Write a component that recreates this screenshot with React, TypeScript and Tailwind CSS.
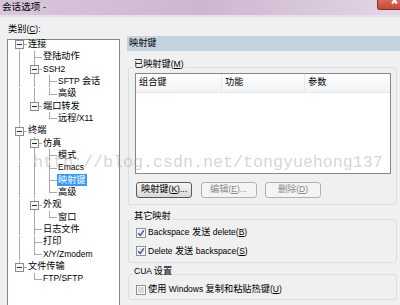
import React from 'react'

// CJK runs render at 9.2px, latin runs a bit smaller (Tahoma-like proportions)
const CJK_SPLIT = /([\u2e80-\u9fff\uff00-\uffef]+)/

function T({ s, big }: { s: string; big?: boolean }) {
  const parts = s.split(CJK_SPLIT)
  return (
    <span className="whitespace-pre">
      {parts.map((p, i) => {
        if (!p) return null
        if (i % 2) return <span key={i} className={big ? 'text-[9.6px]' : 'text-[9.2px]'}>{p}</span>
        const m = p.split(/&(.)/)
        return (
          <span key={i} className={big ? 'text-[9px]' : 'text-[8.5px]'}>
            {m.map((q, j) => (j % 2 ? <u key={j}>{q}</u> : q))}
          </span>
        )
      })}
    </span>
  )
}

type N = { t: string; sel?: boolean; c?: N[] }
type Row = { n: N; guides: boolean[]; last: boolean; first: boolean }

const TREE: N[] = [
  {
    t: '连接',
    c: [
      { t: '登陆动作' },
      { t: 'SSH2', c: [{ t: 'SFTP 会话' }, { t: '高级' }] },
      { t: '端口转发', c: [{ t: '远程/X11' }] },
    ],
  },
  {
    t: '终端',
    c: [
      { t: '仿真', c: [{ t: '模式' }, { t: 'Emacs' }, { t: '映射键', sel: true }, { t: '高级' }] },
      { t: '外观', c: [{ t: '窗口' }] },
      { t: '日志文件' },
      { t: '打印' },
      { t: 'X/Y/Zmodem' },
    ],
  },
  { t: '文件传输', c: [{ t: 'FTP/SFTP' }] },
]

function flatten(nodes: N[], guides: boolean[], out: Row[]) {
  nodes.forEach((n, i) => {
    const last = i === nodes.length - 1
    out.push({ n, guides, last, first: guides.length === 0 && i === 0 })
    if (n.c) flatten(n.c, [...guides, !last], out)
  })
  return out
}
const ROWS = flatten(TREE, [], [])

const H = 12.35
const LINE = '#a9a9a9'

function Guide({ on }: { on: boolean }) {
  return (
    <svg width="15" height={H} className="shrink-0" shapeRendering="crispEdges">
      {on && <line x1="7.5" y1="0" x2="7.5" y2={H} stroke={LINE} />}
    </svg>
  )
}

function Connector({ first, last, exp }: { first: boolean; last: boolean; exp: boolean }) {
  return (
    <svg width="15" height={H} className="shrink-0" shapeRendering="crispEdges">
      {!first && <line x1="7.5" y1="0" x2="7.5" y2="6.5" stroke={LINE} />}
      {!last && <line x1="7.5" y1="6.5" x2="7.5" y2={H} stroke={LINE} />}
      <line x1="7.5" y1="6.5" x2="15" y2="6.5" stroke={LINE} />
      {exp && (
        <>
          <rect x="3.5" y="2.5" width="8" height="8" fill="#f6f6f6" stroke="#8c8c8c" />
          <line x1="5" y1="6.5" x2="10" y2="6.5" stroke="#2b2b2b" />
        </>
      )}
    </svg>
  )
}

function TreeRow({ r }: { r: Row }) {
  return (
    <div className="flex h-[12.35px]">
      {r.guides.map((g, i) => (
        <Guide key={i} on={g} />
      ))}
      <Connector first={r.first} last={r.last} exp={!!r.n.c} />
      <div className={`flex items-center px-[1px] whitespace-nowrap ${r.n.sel ? 'bg-[#3399ff] text-white' : ''}`}>
        <T s={r.n.t} />
      </div>
    </div>
  )
}

function Group({ label, className, children }: { label: string; className: string; children: React.ReactNode }) {
  return (
    <div className={`border border-[#d5dfe5] rounded-[3px] ${className}`}>
      <div className="-mt-[8px] ml-[4px] h-[9px] w-fit px-[1px] bg-[#f0f0f0] whitespace-nowrap flex items-center">
        <T s={label} />
      </div>
      {children}
    </div>
  )
}

function Check({ on }: { on?: boolean }) {
  return (
    <svg width="10" height="10" className="shrink-0" shapeRendering="crispEdges">
      <rect x="0.5" y="0.5" width="9" height="9" fill="#fbfbfb" stroke="#8e8f8f" />
      <rect x="2" y="2" width="6" height="6" fill={on ? '#e3e7ee' : '#d6d8dc'} />
      {on && (
        <path d="M2.3 5.2 L4.2 7.4 L7.9 2.4" stroke="#3c5a9a" strokeWidth="1.4" fill="none" shapeRendering="auto" />
      )}
    </svg>
  )
}

function Btn({ label, primary }: { label: string; primary?: boolean }) {
  return (
    <div
      className={`w-[56px] h-[16px] flex items-center justify-center rounded-[3px] whitespace-nowrap ${
        primary
          ? 'border border-[#555a5e] bg-linear-to-b from-[#f6f6f6] to-[#d9d9d9] text-black'
          : 'border border-[#adb2b5] bg-[#f4f4f4] text-[#8a8a8a]'
      }`}
    >
      <T s={label} />
    </div>
  )
}

export default function App() {
  return (
    <div className="relative w-[400px] h-[305px] overflow-hidden bg-[#f0f0f0] text-black text-[9.2px] leading-none font-['Liberation_Sans','Noto_Sans_CJK_SC',sans-serif]">
      {/* title bar */}
      <div className="flex h-[15px] bg-linear-to-r from-[#d8c6db] via-[#ccb7cf] to-[#e4d5e6]">
        <div className="pl-[2px] flex items-center whitespace-nowrap">
          <T s="会话选项 -" big />
        </div>
        <div className="ml-auto w-[23px] h-[9.5px] rounded-bl-[3px] border-l border-b border-[#86301f] bg-linear-to-b from-[#d86a55] to-[#c4493a] overflow-hidden">
          <svg width="23" height="9">
            <path d="M14 -2 L19 3.5 M19 -2 L14 3.5" stroke="#fff" strokeWidth="2" />
          </svg>
        </div>
      </div>
      <div className="h-[2px] bg-[#e8dfe9]" />

      <div className="flex h-[288px]">
        {/* category tree */}
        <div className="w-[127px] pl-[7px] flex flex-col">
          <div className="h-[22px] pt-[7.5px] pl-[1px] whitespace-nowrap">
            <T s="类别(&C):" />
          </div>
          <div className="w-[113px] flex-1 bg-white border border-b-0 border-[#828790] pl-[4px]">
            <div className="-mt-[1.7px]">
              {ROWS.map((r, i) => (
                <TreeRow key={i} r={r} />
              ))}
            </div>
          </div>
        </div>

        {/* page */}
        <div className="flex-1 pt-[19px]">
          <div className="h-[15px] bg-[#c5d2df] flex items-center pl-[2px]">
            <T s="映射键" />
          </div>

          <Group label="已映射键(&M)" className="mt-[16px] ml-[1px] mr-[3px] pb-[6px]">
            <div className="ml-[6px] mr-[5px] mt-[4px] h-[101px] border border-[#828790] bg-white">
              <div className="h-[19px] flex bg-linear-to-b from-white to-[#f2f3f5] border-b border-[#e3e5e8]">
                <div className="w-[86px] pl-[3px] flex items-center border-r border-[#e8e9ec]">
                  <T s="组合键" />
                </div>
                <div className="w-[83px] pl-[3px] flex items-center border-r border-[#e8e9ec]">
                  <T s="功能" />
                </div>
                <div className="flex-1 pl-[3px] flex items-center">
                  <T s="参数" />
                </div>
              </div>
            </div>
            <div className="flex gap-[8.5px] ml-[7px] mt-[8px]">
              <Btn label="映射键(&K)..." primary />
              <Btn label="编辑(&E)..." />
              <Btn label="删除(&D)" />
            </div>
          </Group>

          <Group label="其它映射" className="mt-[14px] ml-[1px] mr-[3px] pb-[1px]">
            <div className="mt-[2.5px]">
              <div className="h-[18.5px] flex items-center pl-[7px] gap-[2px] whitespace-nowrap">
                <Check on />
                <T s="Backspace 发送 delete(&B)" />
              </div>
              <div className="h-[18.5px] flex items-center pl-[7px] gap-[2px] whitespace-nowrap">
                <Check on />
                <T s="Delete 发送 backspace(&S)" />
              </div>
            </div>
          </Group>

          <Group label="CUA 设置" className="mt-[11.5px] ml-[1px] mr-[3px]">
            <div className="mt-[5.5px] h-[17px] flex items-center pl-[7px] gap-[2px] whitespace-nowrap">
              <Check />
              <T s="使用 Windows 复制和粘贴热键(&U)" />
            </div>
          </Group>
        </div>
      </div>

      {/* blog watermark over the dialog */}
      <div className="absolute left-[33px] top-[155px] whitespace-nowrap pointer-events-none leading-none text-[16.67px] text-[#969696]/40 font-['Liberation_Mono',monospace]">
        http://blog.csdn.net/tongyuehong137
      </div>
    </div>
  )
}
